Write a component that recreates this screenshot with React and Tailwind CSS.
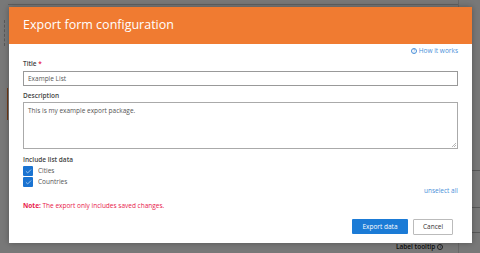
import { Check } from 'lucide-react';

const font = { fontFamily: '"Open Sans", "Noto Sans", sans-serif' };

const Checkbox = ({ label }) => (
  <label className="flex items-center gap-[5px] h-[10px] leading-none">
    <span className="w-[10px] h-[10px] bg-[#1a73d1] flex items-center justify-center rounded-[1px]">
      <Check className="w-[7px] h-[7px] text-white" strokeWidth={2} />
    </span>
    <span className="text-[6.5px] text-[#555]">{label}</span>
  </label>
);

const BackgroundPage = () => (
  <div className="absolute inset-0 bg-white flex">
    <div className="w-[8px] flex flex-col pt-[20px]">
      <div className="ml-[4px] h-[26px] w-[3px] border-l border-dashed border-[#bbb]" />
      <div className="ml-[7px] mt-[42px] h-[32px] w-[1px] bg-[#f07b31]" />
    </div>
    <div className="flex-1 border-t border-[#ccc] mt-[4px]" />
    <div className="w-[22px] flex flex-col pt-[52px] pl-[2px] text-[6.5px] text-[#333] leading-[8px] gap-[6px] border-l border-[#ddd]" style={font}>
      <span>Ex</span>
      <span>out</span>
      <span className="mt-[4px]">tle</span>
      <span className="mt-[72px] border-t border-[#bbb] pt-[2px]">out</span>
      <span className="mt-[20px] border-t border-[#bbb] pt-[2px]">ip</span>
      <span className="mt-[8px] border-t border-[#bbb] pt-[2px]">00</span>
    </div>
    <div className="absolute left-[396px] top-[242px] flex items-center gap-[2px] text-[6.5px] font-semibold text-[#222]" style={font}>
      Label tooltip
      <span className="w-[6px] h-[6px] rounded-full border border-[#444] text-[4px] leading-none flex items-center justify-center">i</span>
    </div>
  </div>
);

export default function App() {
  return (
    <div className="relative w-[480px] h-[253px] overflow-hidden" style={font}>
      <BackgroundPage />
      <div className="absolute inset-0 bg-black/[0.53]" />
      <div className="absolute left-[9px] top-[7px] w-[463px] h-[236px] bg-white flex flex-col shadow-[0_0_6px_rgba(0,0,0,0.3)]">
        <div className="h-[37px] bg-[#f07b31] flex items-center px-[14px]">
          <h1 className="text-[12.5px] text-white leading-none">Export form configuration</h1>
        </div>
        <div className="flex-1 flex flex-col px-[14px]">
          <div className="flex justify-end items-center h-[12px] mt-[1px]">
            <a className="flex items-center gap-[1.5px] text-[6.5px] text-[#4a90d9]">
              <span className="w-[6.5px] h-[6.5px] rounded-full border border-[#4a90d9] text-[4.5px] leading-none flex items-center justify-center">?</span>
              How it works
            </a>
          </div>
          <div className="text-[6.5px] font-semibold text-[#444] mt-[2px] leading-[10px]">
            Title <span className="text-[#e8194a]">*</span>
          </div>
          <div className="h-[15px] border border-[#999] flex items-center px-[4px] text-[6.5px] text-[#555] mt-[2px]">
            Example List
          </div>
          <div className="text-[6.5px] font-semibold text-[#444] mt-[5px] leading-[10px]">Description</div>
          <div className="relative h-[47px] border border-[#aaa] px-[4px] pt-[3px] text-[6.5px] text-[#555] mt-[1px]">
            This is my example export package.
            <svg className="absolute right-[1px] bottom-[1px]" width="5" height="5" viewBox="0 0 5 5">
              <path d="M1 5 L5 1 M3 5 L5 3" stroke="#999" strokeWidth="0.7" />
            </svg>
          </div>
          <div className="text-[6.5px] font-semibold text-[#444] mt-[6px] leading-[10px]">Include list data</div>
          <div className="flex flex-col gap-[1px] mt-[1px]">
            <Checkbox label="Cities" />
            <Checkbox label="Countries" />
          </div>
          <div className="flex justify-end">
            <a className="text-[6.5px] text-[#4a90d9] leading-[8px]">unselect all</a>
          </div>
          <div className="text-[6.5px] text-[#e8194a] mt-[7px] leading-[8px]">
            <span className="font-bold">Note:</span> The export only includes saved changes.
          </div>
          <div className="flex justify-end gap-[5px] mt-[9px] pr-[5px]">
            <button className="w-[56px] h-[15px] bg-[#1b7bd6] text-white text-[6.5px] rounded-[1px]">Export data</button>
            <button className="w-[40px] h-[16px] bg-white border border-[#bbb] text-[#333] text-[6.5px] rounded-[1px]">Cancel</button>
          </div>
        </div>
      </div>
    </div>
  );
}
